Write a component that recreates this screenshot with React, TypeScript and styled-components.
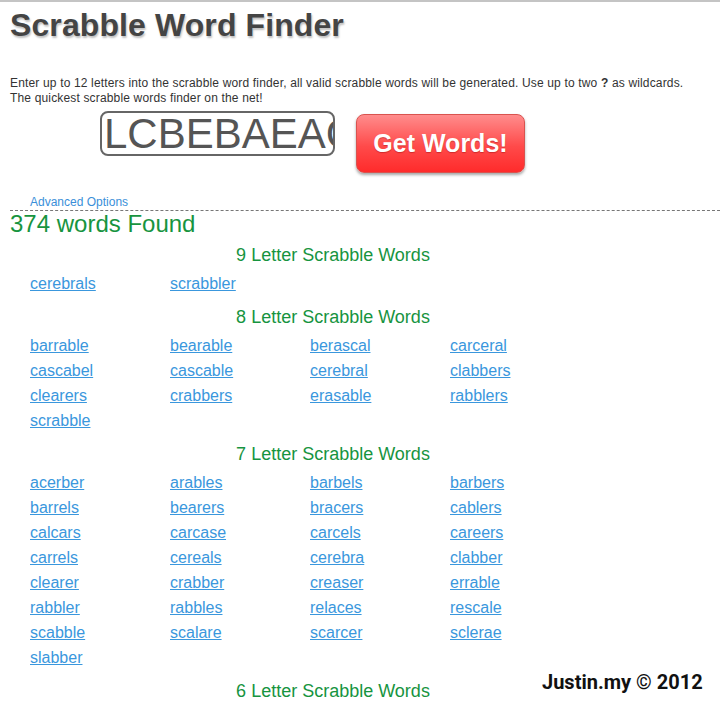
import React from 'react';
import styled, { createGlobalStyle } from 'styled-components';

const GlobalStyle = createGlobalStyle`
  html, body {
    margin: 0;
    padding: 0;
    background: #fff;
    overflow: hidden;
  }
  body {
    font-family: "Liberation Sans", Arial, sans-serif;
    border-top: 2px solid #c4c4c4;
  }
`;

const Page = styled.div`
  position: relative;
  padding: 0 0 40px 10px;
`;

const Title = styled.h1`
  margin: 5px 0 0;
  font-size: 32px;
  line-height: 37px;
  font-weight: bold;
  color: #444;
  letter-spacing: 0.1px;
  text-shadow: 1px 2px 2px rgba(0, 0, 0, 0.25);
`;

const Intro = styled.p`
  margin: 32px 0 0;
  font-size: 12px;
  line-height: 15px;
  letter-spacing: 0.16px;
  color: #333;

  b {
    font-weight: bold;
  }
`;

const Form = styled.div`
  display: flex;
  align-items: flex-start;
  gap: 21px;
  margin: 5px 0 0 90px;
`;

const LetterInput = styled.input`
  box-sizing: border-box;
  width: 235px;
  height: 45px;
  margin: 0;
  border: 2px solid #666;
  border-radius: 8px;
  padding: 0 0 0 2px;
  outline: none;
  font-family: "Liberation Sans", Arial, sans-serif;
  font-size: 42px;
  line-height: 41px;
  color: #555;
  background: #fff;
`;

const GetButton = styled.button`
  box-sizing: border-box;
  margin-top: 3px;
  width: 169px;
  height: 59px;
  border: 1px solid #d9534f;
  border-radius: 8px;
  background: linear-gradient(#ff8c8c, #ff4a4a 55%, #ff2b2b);
  box-shadow: 0 2px 3px rgba(0, 0, 0, 0.35);
  color: #fff;
  font-family: "Liberation Sans", Arial, sans-serif;
  font-size: 25px;
  font-weight: bold;
  text-shadow: 0 1px 1px rgba(120, 0, 0, 0.35);
  cursor: pointer;
`;

const Advanced = styled.a`
  display: block;
  margin: 22px 0 0 20px;
  font-size: 12px;
  line-height: 14px;
  color: #3a8fd9;
  text-decoration: none;
`;

const Divider = styled.hr`
  margin: 1px 0 0;
  border: 0;
  border-top: 1px dashed #777;
`;

const Found = styled.div`
  margin-top: 2px;
  font-size: 24px;
  line-height: 21px;
  color: #17943f;
`;

const Section = styled.section`
  width: 646px;
`;

const SectionHeading = styled.h2`
  margin: 0;
  padding-top: 5px;
  font-size: 18px;
  font-weight: normal;
  line-height: 32px;
  text-align: center;
  color: #17943f;
`;

const WordGrid = styled.div`
  display: grid;
  grid-template-columns: repeat(4, 140px);
  padding-left: 20px;
`;

const Word = styled.a`
  font-size: 16px;
  line-height: 25px;
  color: #3a97dd;
  text-decoration: underline;
  justify-self: start;
`;

const Watermark = styled.div`
  position: absolute;
  top: 663px;
  left: 542px;
  font-family: Roboto, "Liberation Sans", sans-serif;
  font-size: 20px;
  font-weight: bold;
  color: #111;
`;

const groups: { n: number; words: string[] }[] = [
  { n: 9, words: ['cerebrals', 'scrabbler'] },
  {
    n: 8,
    words: [
      'barrable', 'bearable', 'berascal', 'carceral',
      'cascabel', 'cascable', 'cerebral', 'clabbers',
      'clearers', 'crabbers', 'erasable', 'rabblers',
      'scrabble',
    ],
  },
  {
    n: 7,
    words: [
      'acerber', 'arables', 'barbels', 'barbers',
      'barrels', 'bearers', 'bracers', 'cablers',
      'calcars', 'carcase', 'carcels', 'careers',
      'carrels', 'cereals', 'cerebra', 'clabber',
      'clearer', 'crabber', 'creaser', 'errable',
      'rabbler', 'rabbles', 'relaces', 'rescale',
      'scabble', 'scalare', 'scarcer', 'sclerae',
      'slabber',
    ],
  },
  { n: 6, words: [] },
];

export default function App() {
  return (
    <Page>
      <GlobalStyle />
      <Title>Scrabble Word Finder</Title>
      <Intro>
        Enter up to 12 letters into the scrabble word finder, all valid scrabble words will be generated. Use up to two <b>?</b> as wildcards.
        <br />
        The quickest scrabble words finder on the net!
      </Intro>
      <Form>
        <LetterInput type="text" defaultValue="LCBEBAEACLRS" readOnly />
        <GetButton>Get Words!</GetButton>
      </Form>
      <Advanced href="#">Advanced Options</Advanced>
      <Divider />
      <Found>374 words Found</Found>
      {groups.map((g) => (
        <Section key={g.n}>
          <SectionHeading>{g.n} Letter Scrabble Words</SectionHeading>
          <WordGrid>
            {g.words.map((w) => (
              <Word key={w} href="#">{w}</Word>
            ))}
          </WordGrid>
        </Section>
      ))}
      <Watermark>Justin.my © 2012</Watermark>
    </Page>
  );
}
